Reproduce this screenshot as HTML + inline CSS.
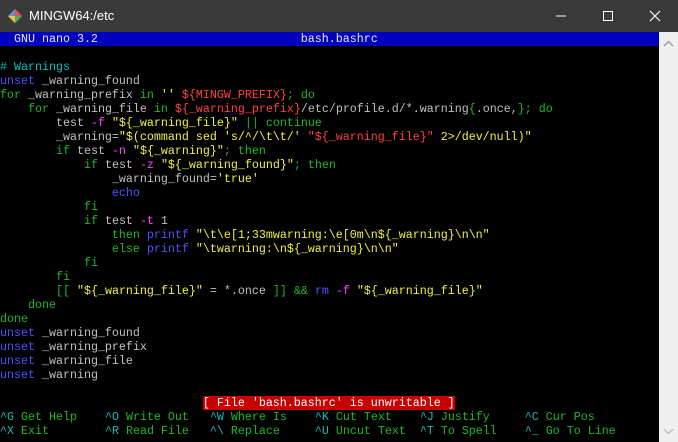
<!DOCTYPE html>
<html><head><style>
body{margin:0;width:678px;height:442px;overflow:hidden;background:#000;font-family:"Liberation Mono",monospace;}
#tb{position:absolute;left:0;top:0;width:678px;height:32px;background:#3a3a3a;}
#tb .t{position:absolute;left:29px;top:8px;color:#fff;font-family:"Liberation Sans",sans-serif;font-size:13px;}
#term{position:absolute;left:0;top:32px;width:659px;height:410px;background:#000;overflow:hidden;}
#sb{position:absolute;left:659px;top:32px;width:19px;height:410px;background:#f0f0f0;}
pre{margin:0;font-family:"Liberation Mono",monospace;font-size:11.67px;line-height:14px;color:#c0c0c0;position:absolute;left:0;top:0;}
.hd{background:#0000bf;color:#e8e8e8;width:659px;display:block;height:14px;}
.c{color:#00bfbf}.b{color:#5050ff}.g{color:#1fb81f}.y{color:#f0f040}.r{color:#ff4040}.m{color:#ff40ff}
.k{color:#1fb8b8}.l{color:#1fb81f}
.st{background:#c80000;color:#fff}
</style></head><body>
<div id="tb">
<svg style="position:absolute;left:7px;top:8px" width="16" height="16" viewBox="0 0 16 16"><path d="M8 1L15 8L8 15L1 8Z" fill="#6a8fd0"/><path d="M8 1L15 8L8 8Z" fill="#e05050"/><path d="M1 8L8 15L8 8Z" fill="#f0c040"/><path d="M8 8L15 8L8 15Z" fill="#50b050"/></svg>
<span class="t">MINGW64:/etc</span>
<svg style="position:absolute;left:556px;top:10px" width="110" height="12"><line x1="0" y1="6" x2="10" y2="6" stroke="#fff"/><rect x="47.5" y="1.5" width="9" height="9" fill="none" stroke="#fff"/><path d="M94 1L104 11M104 1L94 11" stroke="#fff" stroke-width="1.2"/></svg>
</div>
<div id="term"><pre><span class="hd">  GNU nano 3.2                             bash.bashrc</span>
<span class="c"># Warnings</span>
<span class="b">unset</span> _warning_found
<span class="g">for</span> _warning_prefix <span class="g">in</span> <span class="y">''</span> <span class="r">${MINGW_PREFIX}</span><span class="g">; do</span>
    <span class="g">for</span> _warning_file <span class="g">in</span> <span class="r">${_warning_prefix}</span>/etc/profile.d/*.warning<span class="g">{</span>.once,<span class="g">}; do</span>
        test <span class="m">-f</span> <span class="y">"${_warning_file}"</span> <span class="g">|| continue</span>
        _warning=<span class="y">"$(command sed 's/^/\t\t/' </span><span class="r">"${_warning_file}"</span><span class="y"> 2&gt;/dev/null)"</span>
        <span class="g">if</span> test <span class="m">-n</span> <span class="y">"${_warning}"</span><span class="g">; then</span>
            <span class="g">if</span> test <span class="m">-z</span> <span class="y">"${_warning_found}"</span><span class="g">; then</span>
                _warning_found=<span class="y">'true'</span>
                <span class="b">echo</span>
            <span class="g">fi</span>
            <span class="g">if</span> test <span class="m">-t</span> 1
                <span class="g">then</span> <span class="b">printf</span> <span class="y">"\t\e[1;33mwarning:\e[0m\n${_warning}\n\n"</span>
                <span class="g">else</span> <span class="b">printf</span> <span class="y">"\twarning:\n${_warning}\n\n"</span>
            <span class="g">fi</span>
        <span class="g">fi</span>
        <span class="g">[[</span> <span class="y">"${_warning_file}"</span> = *.once <span class="g">]] &amp;&amp;</span> <span class="b">rm</span> <span class="m">-f</span> <span class="y">"${_warning_file}"</span>
    <span class="g">done</span>
<span class="g">done</span>
<span class="b">unset</span> _warning_found
<span class="b">unset</span> _warning_prefix
<span class="b">unset</span> _warning_file
<span class="b">unset</span> _warning

                             <span class="st">[ File 'bash.bashrc' is unwritable ]</span>
<span class="k">^G</span> <span class="l">Get Help</span>    <span class="k">^O</span> <span class="l">Write Out</span>   <span class="k">^W</span> <span class="l">Where Is</span>    <span class="k">^K</span> <span class="l">Cut Text</span>    <span class="k">^J</span> <span class="l">Justify</span>     <span class="k">^C</span> <span class="l">Cur Pos</span>
<span class="k">^X</span> <span class="l">Exit</span>        <span class="k">^R</span> <span class="l">Read File</span>   <span class="k">^\</span> <span class="l">Replace</span>     <span class="k">^U</span> <span class="l">Uncut Text</span>  <span class="k">^T</span> <span class="l">To Spell</span>    <span class="k">^_</span> <span class="l">Go To Line</span></pre></div>
<div id="sb"><svg style="position:absolute;left:4px;top:8px" width="11" height="7"><path d="M1 6L5.5 1.5L10 6" fill="none" stroke="#a0a0a0" stroke-width="1.5"/></svg>
<svg style="position:absolute;left:4px;top:396px" width="11" height="7"><path d="M1 1L5.5 5.5L10 1" fill="none" stroke="#c0c0c0" stroke-width="1.5"/></svg></div>
</body></html>
